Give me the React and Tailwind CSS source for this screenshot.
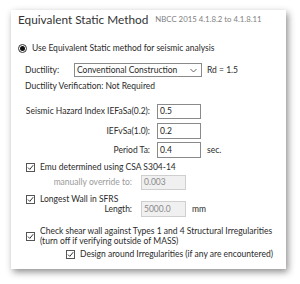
const font = { fontFamily: "Lato, 'Liberation Sans', sans-serif" };

const Check = () => (
  <span className="w-[9px] h-[9px] border border-[#555] bg-white flex items-center justify-center shrink-0">
    <svg width="7" height="7" viewBox="0 0 7 7" fill="none">
      <path d="M1 3.6 L2.8 5.4 L6.2 1.2" stroke="#333" strokeWidth="1" />
    </svg>
  </span>
);

const Field = ({ value, disabled }) => (
  <div
    className={`h-full border px-[2px] flex items-center ${
      disabled
        ? "bg-[#f0f0f0] border-[#cfcfcf] text-[#8a8a8a]"
        : "bg-white border-[#8a8a8a] text-[#222]"
    }`}
  >
    {value}
  </div>
);

export default function App() {
  return (
    <div className="w-[300px] h-[284px] bg-white pt-[10px] pl-[11px]" style={font}>
      <div className="w-[275px] h-[259px] bg-white shadow-[2px_3px_7px_rgba(0,0,0,0.45)] pl-[7px] pt-[1px] text-[8.5px] text-[#2a2a2a]">
        {/* Title */}
        <div className="h-[18px] flex items-center gap-[7px]">
          <span className="text-[11.8px] text-[#333]">Equivalent Static Method</span>
          <span className="text-[7.8px] text-[#808080]">NBCC 2015 4.1.8.2 to 4.1.8.11</span>
        </div>

        {/* Radio */}
        <div className="mt-[12px] h-[14px] flex items-center gap-[5px]">
          <span className="w-[9px] h-[9px] rounded-full border border-[#333] flex items-center justify-center">
            <span className="w-[5px] h-[5px] rounded-full bg-[#111]" />
          </span>
          <span>Use Equivalent Static method for seismic analysis</span>
        </div>

        <div className="pl-[7px]">
          {/* Ductility */}
          <div className="mt-[8px] h-[14px] flex items-center">
            <span className="w-[49px]">Ductility:</span>
            <div className="w-[128px] h-full border border-[#8a8a8a] flex items-center justify-between px-[2px]">
              <span>Conventional Construction</span>
              <svg width="7" height="5" viewBox="0 0 7 5" fill="none" className="mr-[2px]">
                <path d="M0.5 1 L3.5 4 L6.5 1" stroke="#555" strokeWidth="0.9" />
              </svg>
            </div>
            <span className="ml-[5px]">Rd = 1.5</span>
          </div>

          <div className="mt-[2px] h-[14px] flex items-center">Ductility Verification: Not Required</div>

          {/* Seismic inputs */}
          <div className="mt-[11px] h-[15px] flex items-center">
            <span className="w-[125px] text-right">Seismic Hazard Index IEFaSa(0.2):</span>
            <div className="ml-[7px] w-[44px] h-full"><Field value="0.5" /></div>
          </div>
          <div className="mt-[4px] h-[16px] flex items-center">
            <span className="w-[125px] text-right">IEFvSa(1.0):</span>
            <div className="ml-[7px] w-[44px] h-full"><Field value="0.2" /></div>
          </div>
          <div className="mt-[3px] h-[16px] flex items-center">
            <span className="w-[125px] text-right">Period Ta:</span>
            <div className="ml-[7px] w-[44px] h-full"><Field value="0.4" /></div>
            <span className="ml-[6px]">sec.</span>
          </div>

          {/* Emu */}
          <div className="mt-[2px] h-[14px] flex items-center gap-[5px] pl-[1px]">
            <Check />
            <span>Emu determined using CSA S304-14</span>
          </div>
          <div className="mt-[1px] h-[15px] flex items-center">
            <span className="w-[107px] text-right text-[#9a9a9a]">manually override to:</span>
            <div className="ml-[9px] w-[45px] h-full"><Field value="0.003" disabled /></div>
          </div>

          {/* Longest wall */}
          <div className="mt-[3px] h-[12px] flex items-center gap-[5px] pl-[1px]">
            <Check />
            <span>Longest Wall in SFRS</span>
          </div>
          <div className="-mt-[4px] h-[16px] flex items-center">
            <span className="w-[107px] text-right">Length:</span>
            <div className="ml-[9px] w-[45px] h-full"><Field value="5000.0" disabled /></div>
            <span className="ml-[6px]">mm</span>
          </div>

          {/* Irregularities */}
          <div className="mt-[9px] flex items-center gap-[5px] pl-[1px]">
            <Check />
            <span className="leading-[10px]">
              Check shear wall against Types 1 and 4 Structural Irregularities
              <br />
              (turn off if verifying outside of MASS)
            </span>
          </div>
          <div className="mt-[2px] h-[12px] flex items-center gap-[5px] pl-[41px]">
            <Check />
            <span>Design around Irregularities (if any are encountered)</span>
          </div>
        </div>
      </div>
    </div>
  );
}
